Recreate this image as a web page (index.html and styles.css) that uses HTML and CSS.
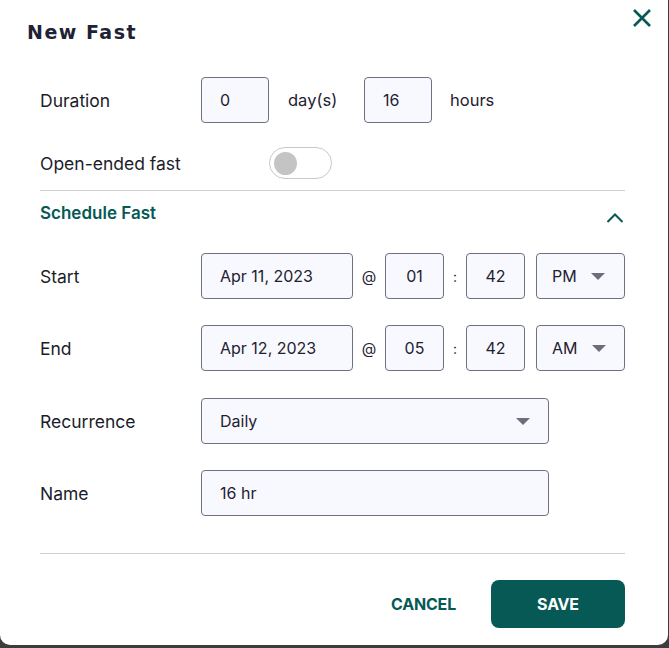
FILE: index.html
```html
<!DOCTYPE html>
<html>
<head>
<meta charset="utf-8">
<link rel="stylesheet" href="styles.css">
</head>
<body>
<div class="dialog">
  <header class="head">
    <h1 class="title">New Fast</h1>
    <button class="close" aria-label="Close">
      <svg width="20" height="20" viewBox="0 0 20 20"><path d="M2 2 L18 18 M18 2 L2 18" stroke="#065955" stroke-width="2.6" fill="none"/></svg>
    </button>
  </header>
  <div class="body">
    <div class="row r-duration">
      <div class="label">Duration</div>
      <div class="fields">
        <div class="box small">0</div>
        <span class="unit days">day(s)</span>
        <div class="box small">16</div>
        <span class="unit">hours</span>
      </div>
    </div>
    <div class="row r-open">
      <div class="label">Open-ended fast</div>
      <div class="toggle"><span class="knob"></span></div>
    </div>
    <hr class="divider">
    <div class="section">
      <span class="section-title">Schedule Fast</span>
      <svg class="chev" width="18" height="10" viewBox="0 0 18 10"><path d="M1.5 9 L9 1.5 L16.5 9" stroke="#065955" stroke-width="2" fill="none"/></svg>
    </div>
    <div class="row r-time">
      <div class="label">Start</div>
      <div class="fields">
        <div class="box date">Apr 11, 2023</div>
        <span class="at">@</span>
        <div class="box hm">01</div>
        <span class="colon">:</span>
        <div class="box hm">42</div>
        <div class="box ampm">PM<span class="caret"></span></div>
      </div>
    </div>
    <div class="row r-time">
      <div class="label">End</div>
      <div class="fields">
        <div class="box date">Apr 12, 2023</div>
        <span class="at">@</span>
        <div class="box hm">05</div>
        <span class="colon">:</span>
        <div class="box hm">42</div>
        <div class="box ampm">AM<span class="caret"></span></div>
      </div>
    </div>
    <div class="row r-wide">
      <div class="label">Recurrence</div>
      <div class="box wide select">Daily<span class="caret"></span></div>
    </div>
    <div class="row r-wide">
      <div class="label">Name</div>
      <div class="box wide">16 hr</div>
    </div>
    <hr class="divider bottom">
    <div class="actions">
      <button class="btn-cancel">CANCEL</button>
      <button class="btn-save">SAVE</button>
    </div>
  </div>
</div>
</body>
</html>
```
FILE: styles.css
```css
html, body {
  margin: 0;
  padding: 0;
  background: #3d3d3f;
  height: 648px;
  overflow: hidden;
}
.dialog {
  width: 668px;
  height: 655px;
  margin-top: -10px;
  background: #ffffff;
  border-radius: 10px;
  box-sizing: border-box;
  font-family: Inter, "Liberation Sans", sans-serif;
  color: #1f2130;
}
.head {
  display: flex;
  justify-content: space-between;
  align-items: flex-start;
  padding: 20px 16px 0 27px;
}
.title {
  margin: 0;
  margin-top: 10px;
  font-family: "DejaVu Sans", sans-serif;
  font-weight: bold;
  font-size: 19px;
  letter-spacing: 1.5px;
  line-height: 24px;
  color: #1e2235;
}
.close {
  border: 0;
  background: none;
  padding: 0;
  width: 20px;
  height: 20px;
  margin-top: -2px;
  cursor: pointer;
}
.body {
  padding: 0 43px 0 40px;
}
.row {
  display: flex;
  align-items: center;
}
.label {
  width: 161px;
  flex: none;
  font-size: 17.5px;
  color: #1b1d2a;
}
.fields {
  display: flex;
  align-items: center;
}
.box {
  box-sizing: border-box;
  height: 46px;
  border: 1px solid #6f7080;
  border-radius: 4px;
  background: #f8f9fe;
  display: flex;
  align-items: center;
  font-size: 16px;
  color: #1f2130;
}
.r-duration {
  margin-top: 33px;
}
.small {
  width: 68px;
  padding-left: 18px;
}
.unit {
  font-size: 16.5px;
  padding: 0 18px;
}
.unit.days {
  box-sizing: border-box;
  width: 95px;
  padding: 0 0 0 19px;
}
.r-open {
  margin-top: 24px;
}
.r-open .label {
  width: 229px;
}
.toggle {
  box-sizing: border-box;
  width: 63px;
  height: 32px;
  border: 1px solid #c9c9cc;
  border-radius: 16px;
  display: flex;
  align-items: center;
  padding-left: 4px;
}
.knob {
  width: 23px;
  height: 23px;
  border-radius: 50%;
  background: #c4c4c4;
}
.divider {
  border: 0;
  border-top: 1px solid #cfcfd2;
  margin: 11px 0 0 0;
}
.section {
  display: flex;
  justify-content: space-between;
  align-items: flex-start;
  margin-top: 12px;
}
.section-title {
  font-size: 17px;
  font-weight: 600;
  color: #065955;
  line-height: 20px;
}
.chev {
  margin-top: 10px;
  margin-right: 1px;
}
.r-time {
  margin-top: 30px;
}
.r-time + .r-time {
  margin-top: 26px;
}
.date {
  width: 152px;
  padding-left: 18px;
}
.at {
  width: 32px;
  text-align: center;
  font-size: 15px;
}
.hm {
  width: 59px;
  justify-content: center;
}
.colon {
  width: 22px;
  text-align: center;
  font-size: 14px;
}
.ampm {
  width: 89px;
  margin-left: 11px;
  padding-left: 15px;
}
.caret {
  width: 0;
  height: 0;
  border-left: 7px solid transparent;
  border-right: 7px solid transparent;
  border-top: 7px solid #6d6e7a;
  margin-left: 14px;
}
.r-wide {
  margin-top: 27px;
}
.r-wide + .r-wide {
  margin-top: 26px;
}
.wide {
  width: 348px;
  padding-left: 18px;
}
.select {
  justify-content: space-between;
  padding-right: 18px;
}
.select .caret {
  margin-left: 0;
}
.divider.bottom {
  margin-top: 37px;
}
.actions {
  display: flex;
  justify-content: flex-end;
  align-items: center;
  margin-top: 26px;
}
.btn-cancel {
  border: 0;
  background: none;
  font-family: Inter, "Liberation Sans", sans-serif;
  font-weight: 700;
  font-size: 16px;
  color: #065955;
  padding: 0;
  margin-right: 35px;
  letter-spacing: -0.2px;
}
.btn-save {
  border: 0;
  width: 134px;
  height: 48px;
  border-radius: 8px;
  background: #065955;
  color: #ffffff;
  font-family: Inter, "Liberation Sans", sans-serif;
  font-weight: 700;
  font-size: 16px;
  letter-spacing: -0.2px;
}
```
